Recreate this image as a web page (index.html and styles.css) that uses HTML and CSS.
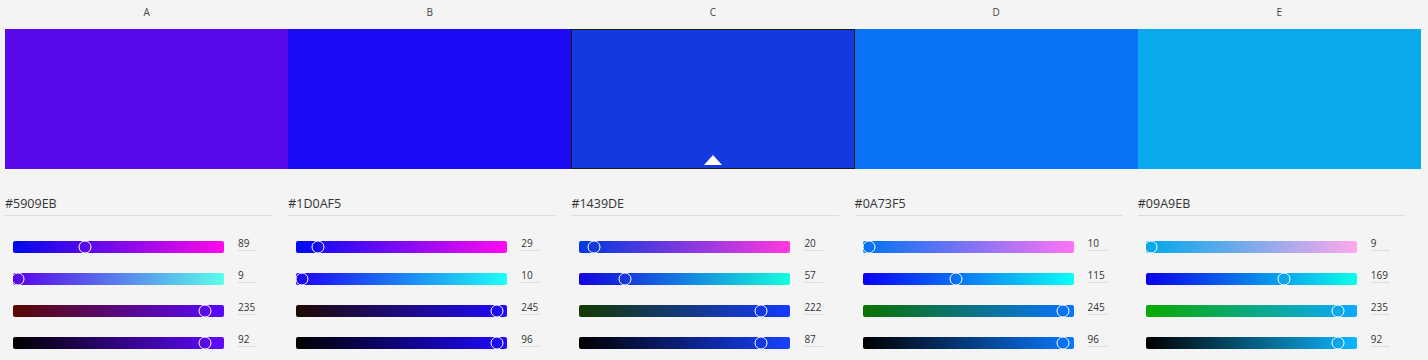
FILE: index.html
```html
<!DOCTYPE html>
<html lang="en">
<head>
  <meta charset="UTF-8">
  <meta name="viewport" content="width=device-width, initial-scale=1.0">
  <title>Color Palette</title>
  <link rel="stylesheet" href="styles.css">
</head>
<body>
  <div class="palette" id="palette"></div>

  <script>
    const colors = [
      { name: 'A', hex: '#5909EB' },
      { name: 'B', hex: '#1D0AF5' },
      { name: 'C', hex: '#1439DE' },
      { name: 'D', hex: '#0A73F5' },
      { name: 'E', hex: '#09A9EB' }
    ];
    const selected = 2;

    function rgb(r, g, b) {
      return 'rgb(' + Math.round(r) + ',' + Math.round(g) + ',' + Math.round(b) + ')';
    }

    function sliderRow(gradient, value, pos) {
      return '<div class="slider-row">' +
        '<div class="track" style="background: linear-gradient(to right, ' + gradient + ')">' +
        '<span class="thumb" style="left: calc(' + (pos * 100).toFixed(2) + '% - 2px)"></span>' +
        '</div>' +
        '<div class="value">' + value + '</div>' +
        '</div>';
    }

    const palette = document.getElementById('palette');

    colors.forEach((c, i) => {
      const r = parseInt(c.hex.slice(1, 3), 16);
      const g = parseInt(c.hex.slice(3, 5), 16);
      const b = parseInt(c.hex.slice(5, 7), 16);
      const max = Math.max(r, g, b);
      const bright = Math.round(max / 255 * 100);
      const k = 255 / max;

      const rows =
        sliderRow(rgb(0, g, b) + ', ' + rgb(255, g, b), r, r / 255) +
        sliderRow(rgb(r, 0, b) + ', ' + rgb(r, 255, b), g, g / 255) +
        sliderRow(rgb(r, g, 0) + ', ' + rgb(r, g, 255), b, b / 255) +
        sliderRow('#000, ' + rgb(r * k, g * k, b * k), bright, max / 255);

      const col = document.createElement('div');
      col.className = 'column';
      col.innerHTML =
        '<div class="label">' + c.name + '</div>' +
        '<div class="swatch' + (i === selected ? ' selected' : '') + '" style="background: ' + c.hex + '"></div>' +
        '<div class="hex">' + c.hex + '</div>' +
        '<div class="sliders">' + rows + '</div>';
      palette.appendChild(col);
    });
  </script>
</body>
</html>
```

FILE: styles.css
```css
body {
  margin: 0;
  background: #f4f4f4;
  font-family: 'Open Sans', 'Noto Sans', sans-serif;
  color: #333;
}

.palette {
  display: grid;
  grid-template-columns: repeat(5, 1fr);
  width: 1416px;
  margin-left: 5px;
}

.label {
  height: 29px;
  line-height: 25px;
  font-size: 10px;
  color: #444;
  text-align: center;
}

.swatch {
  position: relative;
  height: 140px;
  box-sizing: border-box;
}

.swatch.selected {
  border: 1px solid #1a1a1a;
}

.swatch.selected::after {
  content: '';
  position: absolute;
  left: 50%;
  bottom: 3px;
  transform: translateX(-50%);
  border-left: 9px solid transparent;
  border-right: 9px solid transparent;
  border-bottom: 10px solid #fff;
}

.hex {
  margin: 26px 16px 0 0;
  padding-bottom: 3px;
  font-size: 12.5px;
  line-height: 17px;
  color: #333;
  border-bottom: 1px solid #dcdcdc;
}

.sliders {
  margin-top: 25px;
}

.slider-row {
  display: flex;
  align-items: flex-start;
  height: 32px;
  padding-left: 8px;
}

.track {
  position: relative;
  width: 211px;
  height: 12px;
  border-radius: 2px;
}

.thumb {
  position: absolute;
  top: 50%;
  width: 13px;
  height: 13px;
  box-sizing: border-box;
  border: 1.5px solid #fff;
  border-radius: 50%;
  transform: translate(-50%, -50%);
}

.value {
  width: 19px;
  margin: -4px 0 0 14px;
  padding-bottom: 1px;
  font-size: 10px;
  line-height: 12px;
  color: #333;
  border-bottom: 1px solid #dcdcdc;
}
```
